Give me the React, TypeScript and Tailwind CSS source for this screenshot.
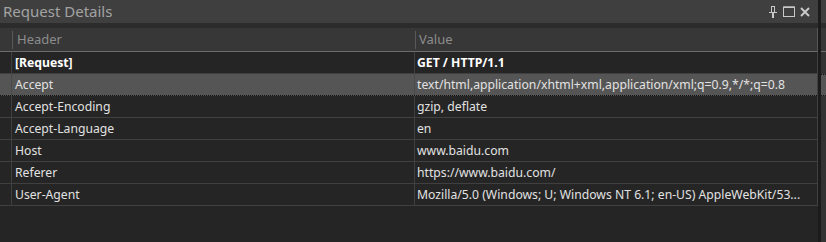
import React from 'react';

const rows: { name: string; value: string; bold?: boolean; selected?: boolean }[] = [
  { name: '[Request]', value: 'GET / HTTP/1.1', bold: true },
  { name: 'Accept', value: 'text/html,application/xhtml+xml,application/xml;q=0.9,*/*;q=0.8', selected: true },
  { name: 'Accept-Encoding', value: 'gzip, deflate' },
  { name: 'Accept-Language', value: 'en' },
  { name: 'Host', value: 'www.baidu.com' },
  { name: 'Referer', value: 'https://www.baidu.com/' },
  { name: 'User-Agent', value: 'Mozilla/5.0 (Windows; U; Windows NT 6.1; en-US) AppleWebKit/53...' },
];

const PinIcon = () => (
  <svg width="10" height="12" viewBox="0 0 10 12" fill="#c8c8c8">
    <rect x="3" y="0" width="1" height="7" />
    <rect x="6" y="0" width="1" height="7" />
    <rect x="3" y="0" width="4" height="1" />
    <rect x="1" y="6" width="8" height="1" />
    <rect x="4" y="7" width="2" height="5" />
  </svg>
);

const MaxIcon = () => (
  <svg width="12" height="11" viewBox="0 0 12 11" fill="none" stroke="#c8c8c8">
    <rect x="0.5" y="1" width="11" height="9.5" strokeWidth="1" />
    <rect x="0.5" y="0.5" width="11" height="1.5" fill="#c8c8c8" strokeWidth="0" />
  </svg>
);

const CloseIcon = () => (
  <svg width="10" height="10" viewBox="0 0 10 10" stroke="#c8c8c8" strokeWidth="2">
    <path d="M1 1 L9 9 M9 1 L1 9" />
  </svg>
);

export default function App() {
  return (
    <div className="flex w-[826px] h-[242px] overflow-hidden bg-[#252525]" style={{ fontFamily: '"Segoe UI", "Noto Sans", "Open Sans", sans-serif' }}>
      <div className="w-[818px] flex flex-col shrink-0">
        {/* title bar */}
        <div className="h-[23px] bg-[#3f3f3f] flex items-center justify-between pl-[3px] pr-[8px]">
          <span className="text-[15px] text-[#a3a3a3] leading-none">Request Details</span>
          <div className="flex items-center gap-[5px]">
            <PinIcon />
            <MaxIcon />
            <CloseIcon />
          </div>
        </div>
        <div className="h-[5px] bg-[#2c2c2c]" />

        {/* column header */}
        <div className="h-[24px] bg-[#373737] flex items-center border-b border-[#6b6b6b] border-r border-r-[#555555] text-[13px] text-[#8c8c8c]">
          <div className="w-[12px] h-full" />
          <div className="w-[403px] h-[18px] border-l border-[#5a5a5a] pl-[4px] flex items-center">Header</div>
          <div className="flex-1 h-[18px] border-l border-[#5a5a5a] pl-[3px] flex items-center">Value</div>
        </div>

        {/* rows */}
        <div className="flex flex-col text-[12.2px] text-[#e2e2e2] border-r border-[#404040]">
          {rows.map((r) => (
            <div
              key={r.name}
              className={
                r.selected
                  ? 'h-[22px] flex bg-[#555555] border-b border-dotted border-[#111111]'
                  : 'h-[22px] flex border-b border-[#404040]'
              }
            >
              <div className="w-[11px] shrink-0" />
              <div className={`w-[403px] shrink-0 border-l ${r.selected ? 'border-[#4a4a4a]' : 'border-[#404040]'} pl-[3px] flex items-center pt-px ${r.bold ? 'font-bold text-white' : ''}`}>
                {r.name}
              </div>
              <div className={`flex-1 border-l ${r.selected ? 'border-[#4a4a4a]' : 'border-[#404040]'} pl-[2px] flex items-center pt-px whitespace-nowrap overflow-hidden ${r.bold ? 'font-bold text-white' : ''}`}>
                {r.value}
              </div>
            </div>
          ))}
        </div>
      </div>

      {/* splitter + neighbour panel */}
      <div className="w-[3px] shrink-0 bg-[#1c1c1c]" />
      <div className="flex-1 flex flex-col bg-[#333333]">
        <div className="h-[23px] bg-[#3f3f3f]" />
        <div className="h-[5px] bg-[#2c2c2c]" />
        <div className="h-[24px] bg-[#373737] border-b border-[#6b6b6b]" />
        <div className="h-[22px]" />
        <div className="h-[22px] bg-[#555555] border-y border-dotted border-[#111111]" />
      </div>
    </div>
  );
}
